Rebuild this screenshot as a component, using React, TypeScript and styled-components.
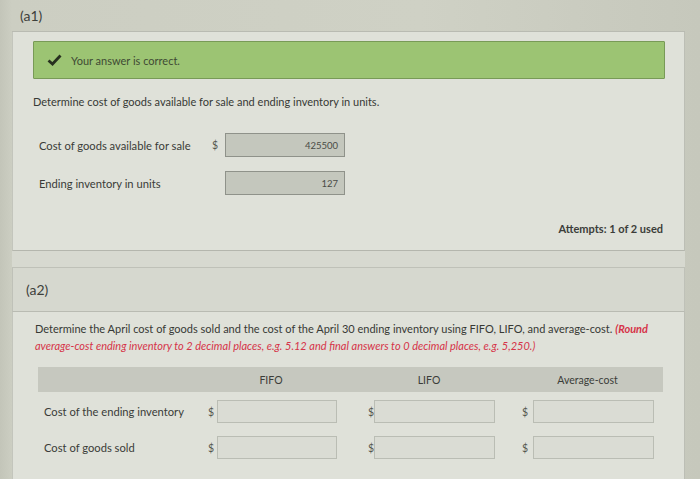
import styled, { createGlobalStyle } from "styled-components";

const GlobalStyle = createGlobalStyle`
  html, body {
    margin: 0;
    padding: 0;
    background: #c9cbbf;
    font-family: Lato, "Open Sans", sans-serif;
    color: #3a3c38;
  }
`;

const Page = styled.div`
  width: 700px;
  height: 479px;
  overflow: hidden;
  display: flex;
  flex-direction: column;
  background: linear-gradient(90deg, #c3c5b9 0, #cccec2 12px, #cfd1c5 60%, #c6c8bc 100%);
  & > * {
    flex-shrink: 0;
  }
`;

const PartHeader = styled.div<{ $h: number; $light?: boolean }>`
  height: ${(p) => p.$h}px;
  box-sizing: border-box;
  display: flex;
  align-items: center;
  padding-left: ${(p) => (p.$light ? 13 : 8)}px;
  margin-left: 12px;
  width: 673px;
  font-size: 14px;
  color: #3d3f3b;
  background: ${(p) => (p.$light ? "#d6d8cf" : "transparent")};
  border: ${(p) => (p.$light ? "1px solid #bfc1b8" : "none")};
  border-bottom: 1px solid #b9bbb2;
`;

const Panel = styled.div<{ $pad: string }>`
  margin-left: 12px;
  width: 673px;
  box-sizing: border-box;
  background: #dfe1d9;
  border-left: 1px solid #c3c5bc;
  border-right: 1px solid #bcbeb5;
  border-bottom: 1px solid #b4b6ad;
  padding: ${(p) => p.$pad};
`;

const Gap = styled.div`
  height: 16px;
  margin-left: 12px;
  width: 673px;
  background: #d7d9d0;
`;

const Feedback = styled.div`
  height: 38px;
  width: 632px;
  box-sizing: border-box;
  background: #9cc473;
  border: 1px solid #789a57;
  border-radius: 1px;
  display: flex;
  align-items: center;
  padding-left: 13px;
  gap: 9px;
  font-size: 11px;
  color: #3f4a34;
`;

const Prompt = styled.p<{ $top?: number }>`
  margin: ${(p) => p.$top ?? 0}px 0 0;
  font-size: 11px;
  line-height: 17px;
  color: #373935;
`;

const Note = styled.span<{ $strong?: boolean }>`
  color: #d63348;
  font-style: italic;
  font-weight: ${(p) => (p.$strong ? 700 : 400)};
`;

const AnswerGrid = styled.div`
  display: grid;
  grid-template-columns: 173px 13px 120px;
  row-gap: 14px;
  align-items: center;
  margin-top: 23px;
  margin-left: 6px;
`;

const Label = styled.span`
  font-size: 11.2px;
  color: #3a3c38;
`;

const Dollar = styled.span`
  font-size: 10.5px;
  color: #55574f;
`;

const Field = styled.div<{ $filled?: boolean }>`
  height: ${(p) => (p.$filled ? 24 : 23)}px;
  box-sizing: border-box;
  display: flex;
  align-items: center;
  justify-content: flex-end;
  padding-right: 6px;
  font-size: 9.5px;
  color: #4a4c46;
  background: ${(p) => (p.$filled ? "#c4c7bd" : "#dadcd4")};
  border: 1px solid ${(p) => (p.$filled ? "#8f928a" : "#babdb4")};
`;

const Attempts = styled.div`
  text-align: right;
  font-size: 11px;
  font-weight: 700;
  color: #3b3d39;
  margin-top: 27px;
  margin-right: 21px;
`;

const Table = styled.div`
  margin-top: 13px;
  margin-left: 3px;
  width: 625px;
`;

const TableHead = styled.div`
  display: grid;
  grid-template-columns: 158px 150px 166px 151px;
  height: 25px;
  align-items: center;
  background: #c6c8bf;
  font-size: 10.5px;
  color: #3b3d39;
`;

const HeadCell = styled.span`
  text-align: center;
`;

const TableRow = styled.div<{ $top: number }>`
  display: grid;
  grid-template-columns: 164px 9px 120px 31px 6px 121px 27px 11px 121px;
  align-items: center;
  height: 23px;
  margin-top: ${(p) => p.$top}px;
  padding-left: 6px;
`;

const Check = () => (
  <svg width="15" height="12" viewBox="0 0 15 12">
    <path d="M1.5 6.5 L5.5 10 L13.5 1.5" fill="none" stroke="#27301f" strokeWidth="2.8" strokeLinejoin="miter" />
  </svg>
);

const methods = ["FIFO", "LIFO", "Average-cost"];
const rows = ["Cost of the ending inventory", "Cost of goods sold"];

export default function App() {
  return (
    <Page>
      <GlobalStyle />
      <PartHeader $h={32}>(a1)</PartHeader>
      <Panel $pad="9px 0 15px 20px">
        <Feedback>
          <Check />
          <span>Your answer is correct.</span>
        </Feedback>
        <Prompt $top={14}>
          Determine cost of goods available for sale and ending inventory in units.
        </Prompt>
        <AnswerGrid>
          <Label>Cost of goods available for sale</Label>
          <Dollar>$</Dollar>
          <Field $filled>425500</Field>
          <Label>Ending inventory in units</Label>
          <span />
          <Field $filled>127</Field>
        </AnswerGrid>
        <Attempts>Attempts: 1 of 2 used</Attempts>
      </Panel>
      <Gap />
      <PartHeader $h={45} $light>(a2)</PartHeader>
      <Panel $pad="8px 0 20px 22px">
        <Prompt>
          Determine the April cost of goods sold and the cost of the April 30 ending inventory using FIFO, LIFO, and
          average-cost. <Note $strong>(Round</Note>
          <br />
          <Note>
            average-cost ending inventory to 2 decimal places, e.g. 5.12 and final answers to 0 decimal places, e.g.
            5,250.)
          </Note>
        </Prompt>
        <Table>
          <TableHead>
            <span />
            {methods.map((m) => (
              <HeadCell key={m}>{m}</HeadCell>
            ))}
          </TableHead>
          {rows.map((r, i) => (
            <TableRow key={r} $top={i === 0 ? 8 : 13}>
              <Label>{r}</Label>
              <Dollar>$</Dollar>
              <Field />
              <span />
              <Dollar>$</Dollar>
              <Field />
              <span />
              <Dollar>$</Dollar>
              <Field />
            </TableRow>
          ))}
        </Table>
      </Panel>
    </Page>
  );
}
